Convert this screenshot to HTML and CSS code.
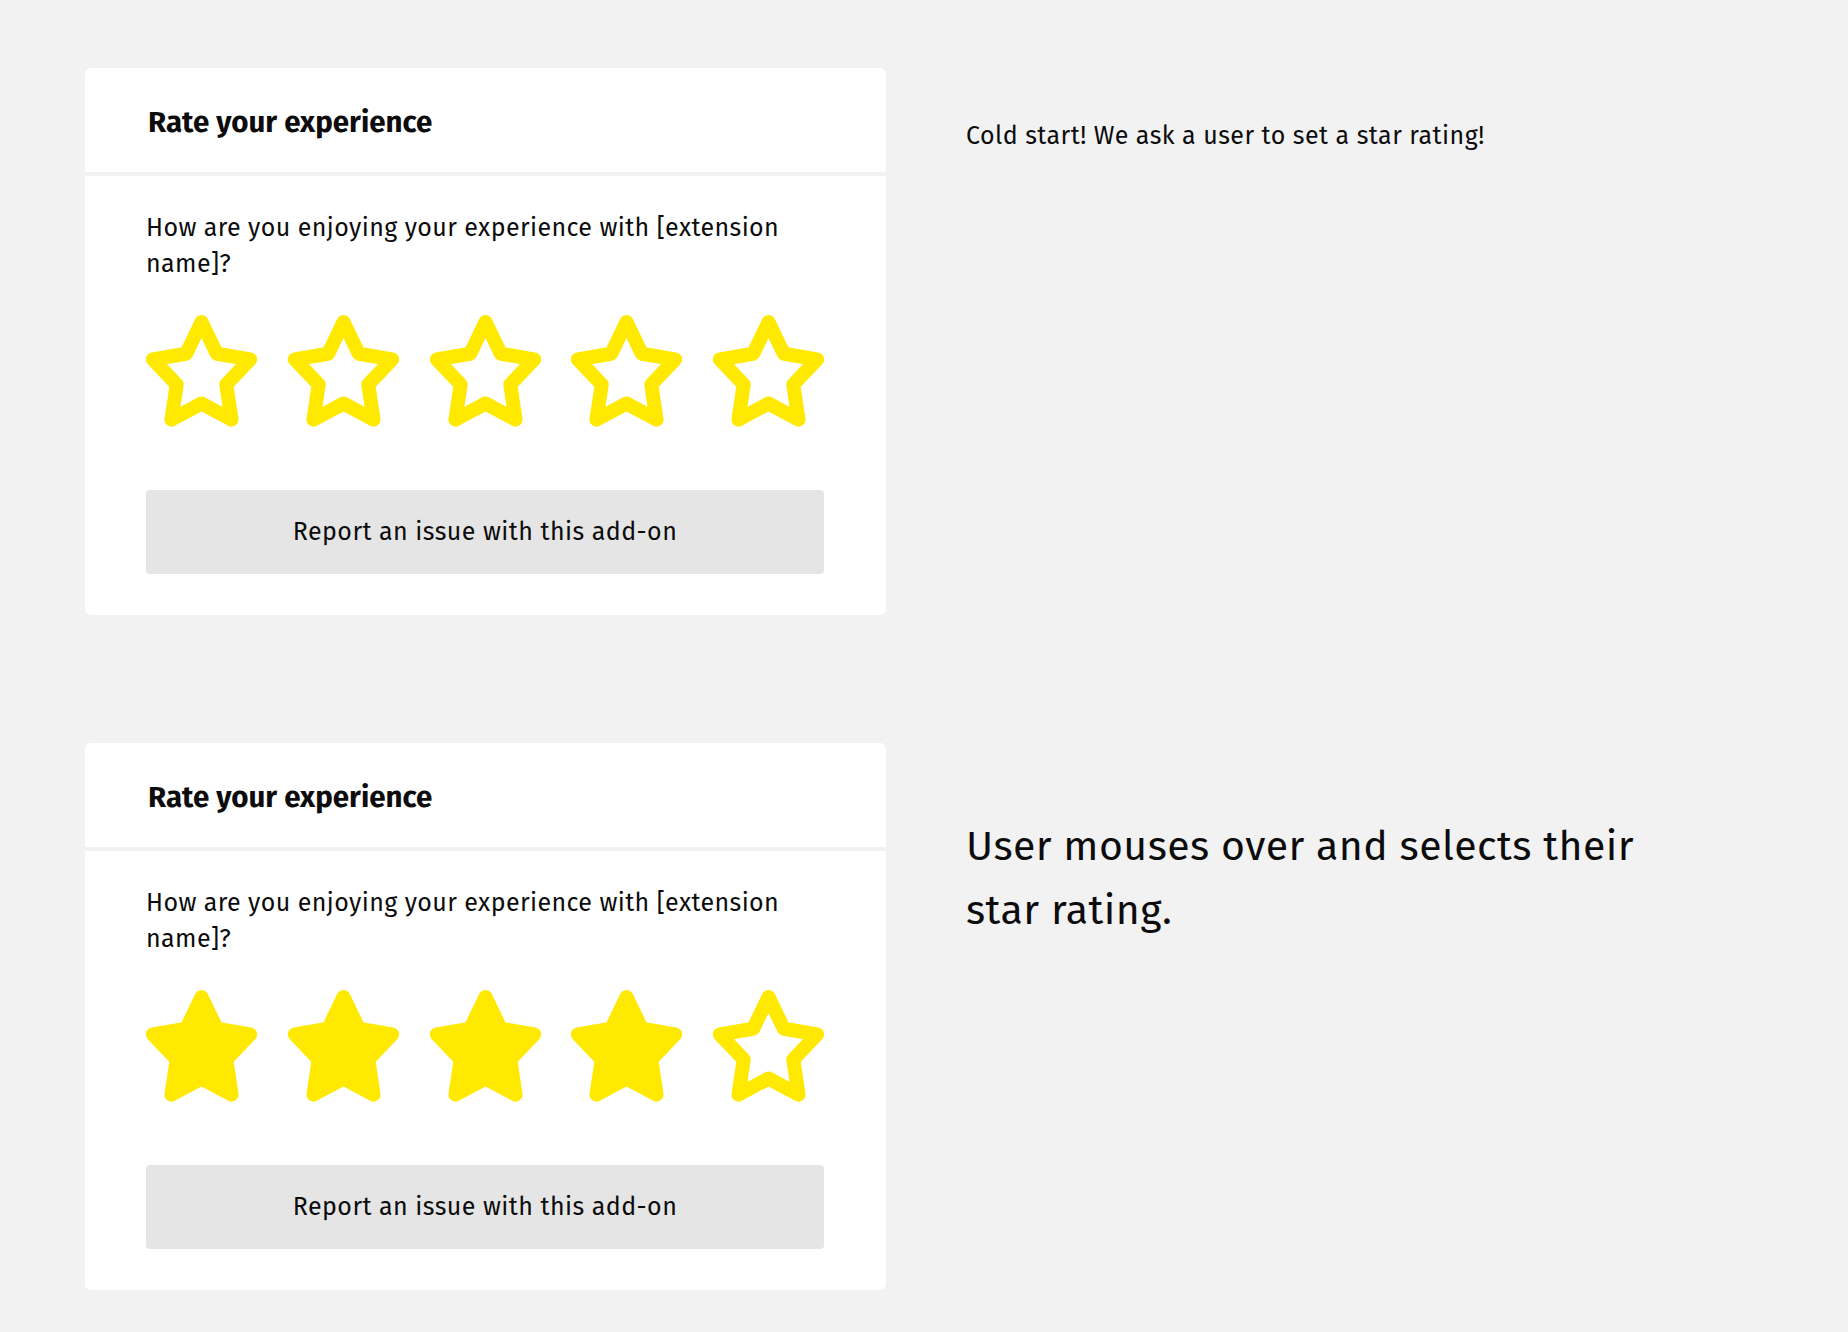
FILE: index.html
```html
<!DOCTYPE html>
<html lang="en">
<head>
<meta charset="utf-8">
<title>Rate your experience</title>
<link rel="stylesheet" href="styles.css">
</head>
<body>
<main class="page">
  <section class="row">
    <div class="card">
      <header class="card-header"><h2 class="card-title">Rate your experience</h2></header>
      <div class="card-body">
        <p class="question">How are you enjoying your experience with [extension name]?</p>
        <div class="stars">
          <svg class="star star-empty" viewBox="-55.5 -61 111 112"><polygon points="0,-53.95 15.31,-22.23 48.65,-16.67 24.78,8.49 30.06,43.65 0,27.49 -30.06,43.65 -24.78,8.49 -48.65,-16.67 -15.31,-22.23"/></svg>
          <svg class="star star-empty" viewBox="-55.5 -61 111 112"><polygon points="0,-53.95 15.31,-22.23 48.65,-16.67 24.78,8.49 30.06,43.65 0,27.49 -30.06,43.65 -24.78,8.49 -48.65,-16.67 -15.31,-22.23"/></svg>
          <svg class="star star-empty" viewBox="-55.5 -61 111 112"><polygon points="0,-53.95 15.31,-22.23 48.65,-16.67 24.78,8.49 30.06,43.65 0,27.49 -30.06,43.65 -24.78,8.49 -48.65,-16.67 -15.31,-22.23"/></svg>
          <svg class="star star-empty" viewBox="-55.5 -61 111 112"><polygon points="0,-53.95 15.31,-22.23 48.65,-16.67 24.78,8.49 30.06,43.65 0,27.49 -30.06,43.65 -24.78,8.49 -48.65,-16.67 -15.31,-22.23"/></svg>
          <svg class="star star-empty" viewBox="-55.5 -61 111 112"><polygon points="0,-53.95 15.31,-22.23 48.65,-16.67 24.78,8.49 30.06,43.65 0,27.49 -30.06,43.65 -24.78,8.49 -48.65,-16.67 -15.31,-22.23"/></svg>
        </div>
        <button class="report-btn" type="button">Report an issue with this add-on</button>
      </div>
    </div>
    <p class="note note-small">Cold start! We ask a user to set a star rating!</p>
  </section>

  <section class="row">
    <div class="card">
      <header class="card-header"><h2 class="card-title">Rate your experience</h2></header>
      <div class="card-body">
        <p class="question">How are you enjoying your experience with [extension name]?</p>
        <div class="stars">
          <svg class="star star-filled" viewBox="-55.5 -61 111 112"><polygon points="0,-53.95 15.31,-22.23 48.65,-16.67 24.78,8.49 30.06,43.65 0,27.49 -30.06,43.65 -24.78,8.49 -48.65,-16.67 -15.31,-22.23"/></svg>
          <svg class="star star-filled" viewBox="-55.5 -61 111 112"><polygon points="0,-53.95 15.31,-22.23 48.65,-16.67 24.78,8.49 30.06,43.65 0,27.49 -30.06,43.65 -24.78,8.49 -48.65,-16.67 -15.31,-22.23"/></svg>
          <svg class="star star-filled" viewBox="-55.5 -61 111 112"><polygon points="0,-53.95 15.31,-22.23 48.65,-16.67 24.78,8.49 30.06,43.65 0,27.49 -30.06,43.65 -24.78,8.49 -48.65,-16.67 -15.31,-22.23"/></svg>
          <svg class="star star-filled" viewBox="-55.5 -61 111 112"><polygon points="0,-53.95 15.31,-22.23 48.65,-16.67 24.78,8.49 30.06,43.65 0,27.49 -30.06,43.65 -24.78,8.49 -48.65,-16.67 -15.31,-22.23"/></svg>
          <svg class="star star-empty" viewBox="-55.5 -61 111 112"><polygon points="0,-53.95 15.31,-22.23 48.65,-16.67 24.78,8.49 30.06,43.65 0,27.49 -30.06,43.65 -24.78,8.49 -48.65,-16.67 -15.31,-22.23"/></svg>
        </div>
        <button class="report-btn" type="button">Report an issue with this add-on</button>
      </div>
    </div>
    <p class="note note-large">User mouses over and selects their star rating.</p>
  </section>
</main>
</body>
</html>
```

FILE: styles.css
```css
* {
  box-sizing: border-box;
}

html, body {
  margin: 0;
  padding: 0;
}

body {
  background: #f2f2f2;
  color: #0c0c0d;
  font-family: "Fira Sans", "Open Sans", "Noto Sans", sans-serif;
}

.page {
  display: flex;
  flex-direction: column;
  gap: 128px;
  padding: 68px 0 40px 85px;
}

.row {
  display: grid;
  grid-template-columns: 801px 1fr;
  column-gap: 80px;
  align-items: start;
}

.card {
  background: #ffffff;
  border-radius: 6px;
  overflow: hidden;
}

.card-header {
  height: 108px;
  display: flex;
  align-items: center;
  padding: 3px 0 0 63px;
  border-bottom: 4px solid #f2f2f2;
}

.card-title {
  margin: 0;
  font-size: 29.5px;
  line-height: 36px;
  font-weight: 700;
}

.card-body {
  padding: 34px 62px 41px 61px;
}

.question {
  margin: 0;
  font-size: 25px;
  line-height: 36px;
  letter-spacing: 0.4px;
}

.stars {
  display: flex;
  justify-content: space-between;
  margin: 33px 0 0 0;
}

.star {
  width: 111px;
  height: 112px;
  display: block;
  flex: none;
}

.star polygon {
  stroke: #ffe900;
  stroke-width: 14;
  stroke-linejoin: round;
}

.star-empty polygon {
  fill: none;
}

.star-filled polygon {
  fill: #ffe900;
}

.report-btn {
  display: block;
  width: 100%;
  height: 84px;
  margin-top: 63px;
  border: none;
  border-radius: 4px;
  background: #e5e5e5;
  color: #0c0c0d;
  font-family: inherit;
  font-size: 25px;
  letter-spacing: 0.45px;
  padding: 0;
}

.note {
  margin: 0;
}

.note-small {
  margin-top: 50px;
  font-size: 25px;
  line-height: 36px;
  letter-spacing: 0.45px;
}

.note-large {
  margin-top: 72px;
  max-width: 700px;
  font-size: 41px;
  line-height: 64px;
  letter-spacing: 0.45px;
}
```
